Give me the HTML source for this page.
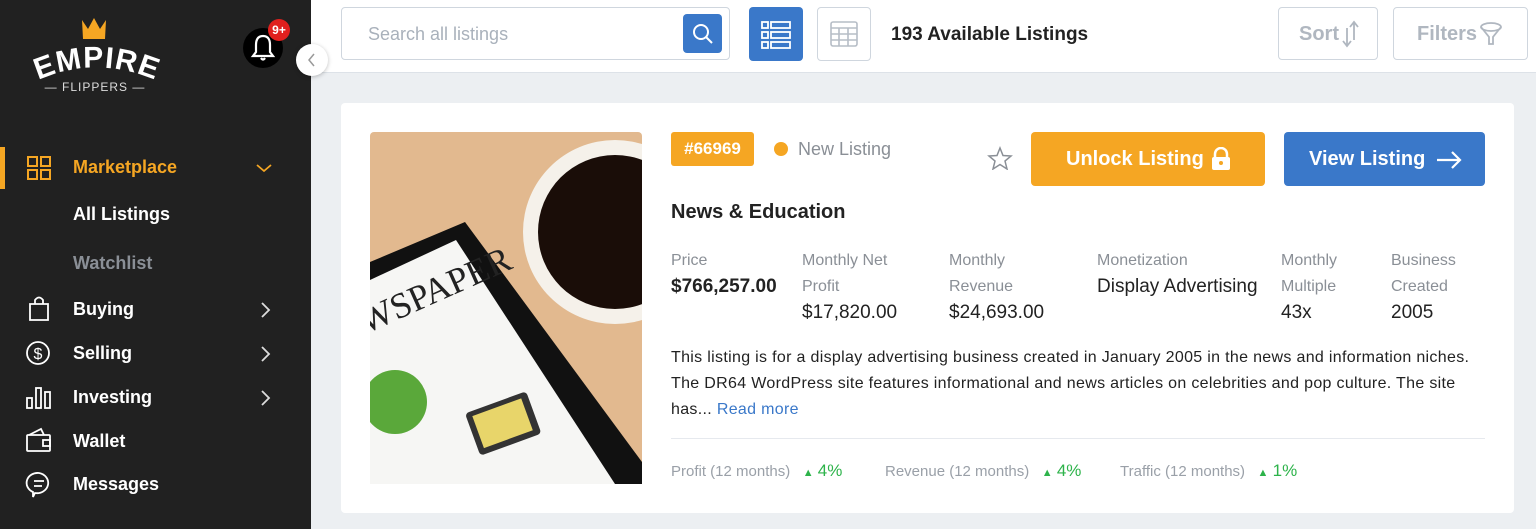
<!DOCTYPE html>
<html><head><meta charset="utf-8"><style>
*{margin:0;padding:0;box-sizing:border-box}
body{width:1536px;height:529px;overflow:hidden;font-family:"Liberation Sans",sans-serif;background:#eceff2;position:relative}
.a{position:absolute}
.side{left:0;top:0;width:311px;height:529px;background:#212121}
.nav{left:73px;color:#fff;font-size:18px;font-weight:bold}
.lbl{color:#8a8f96;font-size:16px;line-height:26px}
.val{color:#222;font-size:19px;line-height:26px}
</style></head><body>
<div class="a side"></div>
<svg class="a" style="left:20px;top:15px" width="150" height="85" viewBox="0 0 150 85">
<path d="M62 5 L68 14 L74 3 L80 14 L86 5 L85 24 L63 24 Z" fill="#f5a623"/>
<path id="arc" d="M8 70 Q75 35 146 70" fill="none"/>
<text font-family="Liberation Sans" font-weight="bold" font-size="30" fill="#fff" letter-spacing="1"><textPath href="#arc" startOffset="50%" text-anchor="middle">EMPIRE</textPath></text>
<text x="75" y="76" text-anchor="middle" fill="#ddd" font-family="Liberation Sans" font-size="12" letter-spacing="1">— FLIPPERS —</text>
</svg>
<div class="a" style="left:243px;top:28px;width:40px;height:40px;border-radius:50%;background:#000"></div>
<svg class="a" style="left:250px;top:33px" width="26" height="30" viewBox="0 0 26 30"><path d="M13 3 C7 3 6 8 6 12 L6 19 L3 23 L23 23 L20 19 L20 12 C20 8 19 3 13 3Z M11 25 Q13 28 15 25" fill="none" stroke="#fff" stroke-width="2.2"/></svg>
<div class="a" style="left:268px;top:19px;width:22px;height:22px;border-radius:50%;background:#e0201e;color:#fff;font-size:12px;font-weight:bold;text-align:center;line-height:22px">9+</div>
<div class="a" style="left:0;top:147px;width:5px;height:42px;background:#f5a623"></div>
<svg class="a" style="left:26px;top:155px" width="26" height="26" viewBox="0 0 26 26" fill="none" stroke="#f5a623" stroke-width="2"><rect x="2" y="2" width="9" height="9"/><rect x="15" y="2" width="9" height="9"/><rect x="2" y="15" width="9" height="9"/><rect x="15" y="15" width="9" height="9"/></svg>
<div class="a nav" style="top:157px;color:#f5a623">Marketplace</div>
<svg class="a" style="left:255px;top:162px" width="18" height="12"><path d="M2 3 L9 9 L16 3" fill="none" stroke="#f5a623" stroke-width="1.8"/></svg>
<div class="a nav" style="top:204px">All Listings</div>
<div class="a nav" style="top:253px;color:#8a8f96">Watchlist</div>
<svg class="a" style="left:26px;top:295px" width="26" height="28" fill="none" stroke="#fff" stroke-width="1.8"><path d="M4 9 L22 9 L22 25 L4 25 Z M9 9 L9 5 Q13 0 17 5 L17 9"/></svg>
<div class="a nav" style="top:299px">Buying</div>
<div class="a nav" style="top:343px">Selling</div>
<div class="a nav" style="top:387px">Investing</div>
<div class="a nav" style="top:431px">Wallet</div>
<div class="a nav" style="top:474px">Messages</div>
<svg class="a" style="left:24px;top:338px" width="30" height="30" fill="none" stroke="#fff" stroke-width="1.8"><circle cx="14" cy="15" r="11"/><text x="14" y="21" text-anchor="middle" font-size="16" fill="#fff" stroke="none" font-family="Liberation Sans">$</text></svg>
<svg class="a" style="left:25px;top:384px" width="28" height="26" fill="none" stroke="#fff" stroke-width="1.8"><rect x="2" y="14" width="5" height="10"/><rect x="11" y="4" width="5" height="20"/><rect x="20" y="8" width="5" height="16"/></svg>
<svg class="a" style="left:25px;top:427px" width="28" height="26" fill="none" stroke="#fff" stroke-width="1.8"><rect x="2" y="8" width="23" height="16" rx="1"/><path d="M4 8 L16 2 L19 8"/><rect x="18" y="13" width="7" height="6"/></svg>
<svg class="a" style="left:25px;top:470px" width="28" height="28" fill="none" stroke="#fff" stroke-width="1.8"><path d="M14 3 A11 10 0 1 1 10 23 L8 27 L8 22 A11 10 0 0 1 14 3Z"/><path d="M9 11 H19 M9 16 H17"/></svg>
<svg class="a" style="left:258px;top:301px" width="14" height="18"><path d="M4 2 L11 9 L4 16" fill="none" stroke="#ddd" stroke-width="1.8"/></svg>
<svg class="a" style="left:258px;top:345px" width="14" height="18"><path d="M4 2 L11 9 L4 16" fill="none" stroke="#ddd" stroke-width="1.8"/></svg>
<svg class="a" style="left:258px;top:389px" width="14" height="18"><path d="M4 2 L11 9 L4 16" fill="none" stroke="#ddd" stroke-width="1.8"/></svg>
<div class="a" style="left:311px;top:0;width:1225px;height:73px;background:#fff;border-bottom:1px solid #dde2e8"></div>
<div class="a" style="left:296px;top:44px;width:32px;height:32px;border-radius:50%;background:#fff;box-shadow:0 1px 4px rgba(0,0,0,.25)"></div>
<svg class="a" style="left:306px;top:52px" width="12" height="16"><path d="M8 2 L3 8 L8 14" fill="none" stroke="#999" stroke-width="1.5"/></svg>
<div class="a" style="left:341px;top:7px;width:389px;height:53px;border:1px solid #cfd6de;border-radius:4px"></div>
<div class="a" style="left:368px;top:24px;color:#a9b1bb;font-size:18px">Search all listings</div>
<div class="a" style="left:683px;top:14px;width:39px;height:39px;border-radius:4px;background:#3a78c9"></div>
<svg class="a" style="left:691px;top:22px" width="24" height="24" fill="none" stroke="#fff" stroke-width="2"><circle cx="10" cy="10" r="7"/><path d="M15 15 L21 21"/></svg>
<div class="a" style="left:749px;top:7px;width:54px;height:54px;border-radius:4px;background:#3a78c9"></div>
<svg class="a" style="left:760px;top:20px" width="32" height="30" fill="none" stroke="#fff" stroke-width="1.8"><rect x="2" y="2" width="6" height="6"/><rect x="2" y="12" width="6" height="6"/><rect x="2" y="22" width="6" height="6"/><rect x="11" y="2" width="19" height="6"/><rect x="11" y="12" width="19" height="6"/><rect x="11" y="22" width="19" height="6"/></svg>
<div class="a" style="left:817px;top:7px;width:54px;height:54px;border-radius:4px;border:1px solid #cfd6de"></div>
<svg class="a" style="left:829px;top:20px" width="30" height="28" fill="none" stroke="#b6bdc6" stroke-width="1.6"><rect x="2" y="2" width="26" height="24" rx="2"/><path d="M2 8 H28 M2 14 H28 M2 20 H28 M10 8 V26 M19 8 V26"/></svg>
<div class="a" style="left:891px;top:24px;color:#222;font-size:19px;font-weight:bold">193 Available Listings</div>
<div class="a" style="left:1278px;top:7px;width:100px;height:53px;border:1px solid #cfd6de;border-radius:4px;color:#b0b7c0;font-size:20px;font-weight:bold;padding:15px 0 0 20px">Sort</div>
<svg class="a" style="left:1341px;top:20px" width="20" height="28" fill="none" stroke="#b0b7c0" stroke-width="1.8"><path d="M6 8 V26 M2 21 L6 26 L10 21 M13 2 V20 M9 7 L13 2 L17 7"/></svg>
<div class="a" style="left:1393px;top:7px;width:135px;height:53px;border:1px solid #cfd6de;border-radius:4px;color:#b0b7c0;font-size:20px;font-weight:bold;padding:15px 0 0 23px">Filters</div>
<svg class="a" style="left:1479px;top:21px" width="24" height="26" fill="none" stroke="#b0b7c0" stroke-width="1.8"><ellipse cx="12" cy="6" rx="10" ry="4"/><path d="M2 6 L10 16 L10 23 L14 23 L14 16 L22 6"/></svg>
<div class="a" style="left:341px;top:103px;width:1173px;height:410px;background:#fff;border-radius:4px"></div>
<svg class="a" style="left:370px;top:132px" width="272" height="352" viewBox="0 0 272 352">
<rect width="272" height="352" rx="4" fill="#e2b98f"/>
<circle cx="245" cy="100" r="92" fill="#f5f1ea"/>
<circle cx="245" cy="100" r="77" fill="#1a0d08"/>
<path d="M0 130 L95 90 L272 330 L272 352 L0 352 Z" fill="#111"/>
<path d="M0 148 L86 108 L245 352 L0 352 Z" fill="#f6f6f4"/>
<text x="-5" y="200" transform="rotate(-24 0 200)" font-family="Liberation Serif" font-size="36" fill="#222">WSPAPER</text>
<circle cx="25" cy="270" r="32" fill="#5aa83a"/>
<rect x="100" y="270" width="65" height="45" rx="4" transform="rotate(-20 130 290)" fill="#333"/>
<rect x="106" y="275" width="52" height="34" transform="rotate(-20 130 290)" fill="#e8d56a"/>
</svg>
<div class="a" style="left:671px;top:132px;width:83px;height:34px;background:#f5a623;border-radius:3px;color:#fff;font-weight:bold;font-size:17px;text-align:center;line-height:34px">#66969</div>
<div class="a" style="left:774px;top:142px;width:14px;height:14px;border-radius:50%;background:#f5a623"></div>
<div class="a" style="left:798px;top:139px;color:#8a8f96;font-size:18px">New Listing</div>
<svg class="a" style="left:987px;top:146px" width="26" height="24" fill="none" stroke="#8a8f96" stroke-width="1.5"><path d="M13 2 L16 9.5 L24 10 L18 15 L20 23 L13 18.5 L6 23 L8 15 L2 10 L10 9.5 Z"/></svg>
<div class="a" style="left:1031px;top:132px;width:234px;height:54px;background:#f5a623;border-radius:4px;color:#fff;font-size:20px;font-weight:bold;line-height:54px;padding-left:35px">Unlock Listing</div>
<svg class="a" style="left:1210px;top:147px" width="22" height="24" fill="#fff"><path d="M5 10 V7 A6 6 0 0 1 17 7 V10" fill="none" stroke="#fff" stroke-width="2.5"/><rect x="2" y="10" width="18" height="13" rx="2"/><circle cx="11" cy="16" r="2" fill="#f5a623"/></svg>
<div class="a" style="left:1284px;top:132px;width:201px;height:54px;background:#3a78c9;border-radius:4px;color:#fff;font-size:20px;font-weight:bold;line-height:54px;padding-left:25px">View Listing</div>
<svg class="a" style="left:1435px;top:150px" width="28" height="20" fill="none" stroke="#fff" stroke-width="2.2"><path d="M2 10 H25 M17 2 L25 10 L17 18"/></svg>
<div class="a" style="left:671px;top:201px;color:#222;font-size:20px;font-weight:bold">News &amp; Education</div>
<div class="a" style="left:671px;top:248px"><div class="lbl">Price</div><div class="val" style="font-weight:bold">$766,257.00</div></div>
<div class="a" style="left:802px;top:248px"><div class="lbl">Monthly Net<br>Profit</div><div class="val">$17,820.00</div></div>
<div class="a" style="left:949px;top:248px"><div class="lbl">Monthly<br>Revenue</div><div class="val">$24,693.00</div></div>
<div class="a" style="left:1097px;top:248px"><div class="lbl">Monetization</div><div class="val">Display Advertising</div></div>
<div class="a" style="left:1281px;top:248px"><div class="lbl">Monthly<br>Multiple</div><div class="val">43x</div></div>
<div class="a" style="left:1391px;top:248px"><div class="lbl">Business<br>Created</div><div class="val">2005</div></div>
<div class="a" style="left:671px;top:345px;color:#222;font-size:16px;line-height:26px;white-space:nowrap;letter-spacing:0.32px">This listing is for a display advertising business created in January 2005 in the news and information niches.<br>The DR64 WordPress site features informational and news articles on celebrities and pop culture. The site<br>has... <span style="color:#3a78c9">Read more</span></div>
<div class="a" style="left:671px;top:438px;width:814px;height:1px;background:#e6e9ee"></div>
<div class="a" style="left:671px;top:461px;font-size:15px;color:#9aa0a8;white-space:pre">Profit (12 months)   <span style="color:#2db34a;font-size:11px">▲</span> <span style="color:#2db34a;font-size:17px">4%</span></div>
<div class="a" style="left:885px;top:461px;font-size:15px;color:#9aa0a8;white-space:pre">Revenue (12 months)   <span style="color:#2db34a;font-size:11px">▲</span> <span style="color:#2db34a;font-size:17px">4%</span></div>
<div class="a" style="left:1120px;top:461px;font-size:15px;color:#9aa0a8;white-space:pre">Traffic (12 months)   <span style="color:#2db34a;font-size:11px">▲</span> <span style="color:#2db34a;font-size:17px">1%</span></div>
</body></html>
